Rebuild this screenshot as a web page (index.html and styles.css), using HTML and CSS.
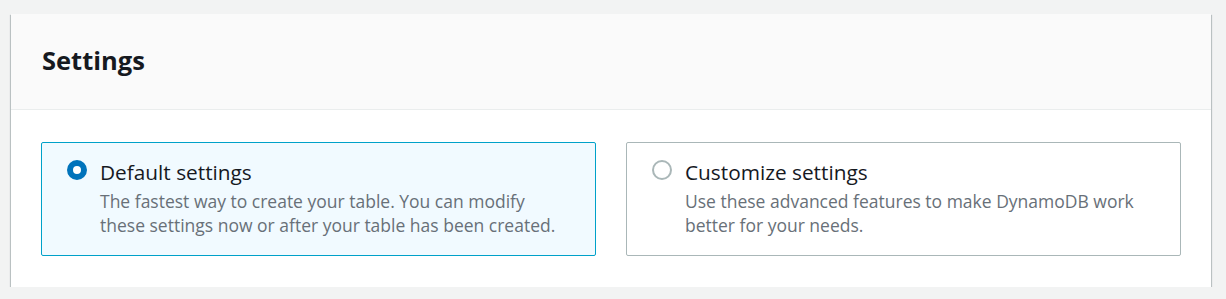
FILE: index.html
```html
<!DOCTYPE html>
<html>
<head>
<meta charset="utf-8">
<link rel="stylesheet" href="styles.css">
</head>
<body>
<div class="card">
  <div class="card-header"><h2 class="title">Settings</h2></div>
  <div class="card-body">
    <label class="tile selected">
      <span class="radio checked"></span>
      <span class="tile-text">
        <span class="tile-label">Default settings</span>
        <span class="tile-desc">The fastest way to create your table. You can modify these settings now or after your table has been created.</span>
      </span>
    </label>
    <label class="tile">
      <span class="radio"></span>
      <span class="tile-text">
        <span class="tile-label">Customize settings</span>
        <span class="tile-desc">Use these advanced features to make DynamoDB work better for your needs.</span>
      </span>
    </label>
  </div>
</div>
</body>
</html>
```
FILE: styles.css
```css
html, body { margin: 0; padding: 0; }
body {
  background: #f2f3f3;
  font-family: "Open Sans", "Noto Sans", sans-serif;
  color: #16191f;
  padding: 14px 15px 0 11px;
}
.card {
  background: #fff;
  box-shadow: 0 1px 1px 0 rgba(0,28,36,.35), 1px 1px 1px 0 rgba(0,28,36,.18), -1px 1px 1px 0 rgba(0,28,36,.18);
}
.card-header {
  background: #fafafa;
  border-bottom: 1px solid #eaeded;
  height: 95px;
  display: flex;
  align-items: center;
  padding: 0 31px;
}
.title {
  margin: 0 0 4px;
  font-size: 25.5px;
  line-height: 32px;
  font-weight: 700;
  color: #16191f;
}
.card-body {
  display: grid;
  grid-template-columns: 1fr 1fr;
  gap: 30px;
  padding: 32px 30px 31px 30px;
}
.tile {
  display: flex;
  gap: 13px;
  border: 1px solid #aab7b8;
  border-radius: 2px;
  padding: 16px 30px 18px 25px;
  background: #fff;
}
.tile.selected {
  border-color: #00a1c9;
  background: #f1faff;
}
.radio {
  flex: none;
  width: 20px;
  height: 20px;
  box-sizing: border-box;
  border-radius: 50%;
  border: 2px solid #aab7b8;
  background: #fff;
  margin-top: 1px;
}
.radio.checked {
  border: 6px solid #0073bb;
}
.tile-text { display: flex; flex-direction: column; }
.tile-label {
  font-size: 20.8px;
  line-height: 26px;
  color: #16191f;
}
.tile-desc {
  font-size: 17.5px;
  line-height: 24px;
  color: #687078;
  margin-top: 4px;
}
```
